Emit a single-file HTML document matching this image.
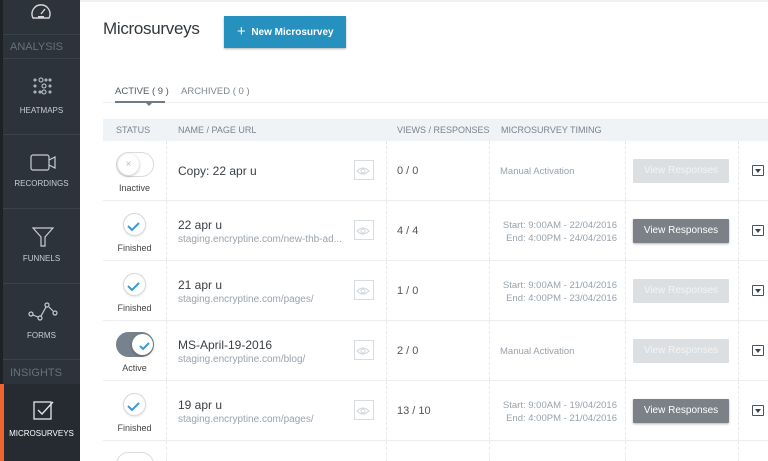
<!DOCTYPE html>
<html style="overflow:hidden;height:461px"><head><style>
*{margin:0;padding:0;box-sizing:border-box}
body{width:768px;height:461px;overflow:hidden;background:#fff;font-family:"Liberation Sans",sans-serif;position:relative}
.sb{position:absolute;left:0;top:0;width:80px;height:461px;background:#2c333b;border-left:3px solid #1d2227}
.sb .lab{position:absolute;left:0;width:77px;text-align:center;color:#c8ced4;font-size:8px}
.sb .sec{position:absolute;left:0;width:77px;color:#68717a;font-size:11px;padding-left:7px}
.sb .ln{position:absolute;left:0;width:77px;height:1px;background:#3a424a}
.abs{position:absolute}
.row{position:absolute;left:103px;width:665px;height:60px;border-bottom:1px solid #eceef0;overflow:hidden}
.vd{position:absolute;top:0;width:0;height:100%;border-left:1px dashed #e6e8ea}
.nm{position:absolute;left:75px;font-size:12px;color:#3b4046}
.url{position:absolute;left:75px;font-size:10px;color:#9aa3ab}
.eye{position:absolute;left:251px;top:19px;width:20px;height:20px;border:1px solid #d8dde2}
.vr{position:absolute;left:294px;font-size:11px;color:#555;top:24px}
.tm{position:absolute;left:397px;font-size:9.5px;color:#98a2ac;text-align:right;width:117px}
.btn{position:absolute;left:530px;top:18px;width:96px;height:24px;background:#dcdfe1;color:#f2f3f4;font-size:10px;text-align:center;line-height:24px;border-radius:1px}
.btn.on{background:#7b8187;color:#fff;box-shadow:0 1px 2px rgba(0,0,0,.3)}
.dd{position:absolute;left:649px;top:24px;width:12px;height:11px;border:1px solid #4b535b;border-radius:1px}
.dd:after{content:"";position:absolute;left:2px;top:3px;border:3px solid transparent;border-top:4px solid #3b434b}
.st{position:absolute;width:63px;text-align:center;font-size:9px;color:#444;top:42px;left:0}
.chk{position:absolute;left:20px;top:12px;width:23px;height:23px;border-radius:50%;border:1px solid #d5d9dd;background:#fff;box-shadow:0 1px 2px rgba(0,0,0,.1)}
.tg{position:absolute;left:13px;top:11px;width:38px;height:25px;border-radius:13px;border:1px solid #d8dcdf;background:#fff}
.tg.on{background:#76828d;border-color:#76828d}
.knob{position:absolute;top:1px;width:21px;height:21px;border-radius:50%;background:#fff;box-shadow:0 1px 3px rgba(0,0,0,.25)}
</style></head><body>
<div class="sb">
<svg class="abs" style="left:27px;top:3px" width="22" height="17" viewBox="0 0 22 17"><path d="M3 15 A9 9 0 1 1 19 15 Z" fill="none" stroke="#d4d8dc" stroke-width="1.4"/><path d="M11 11 L15 6" stroke="#d4d8dc" stroke-width="1.4"/><rect x="8" y="13" width="6" height="2" fill="#d4d8dc"/></svg>
<div class="ln" style="top:34px"></div>
<div class="sec" style="top:41px">ANALYSIS</div>
<div class="ln" style="top:58px"></div>
<svg class="abs" style="left:30px;top:77px" width="20" height="20" viewBox="0 0 20 20" fill="none" stroke="#c8ced4" stroke-width="1"><circle cx="2" cy="3" r="1"/><circle cx="8" cy="3" r="2"/><circle cx="13" cy="3" r="1"/><circle cx="17" cy="3" r="1"/><circle cx="2" cy="9" r="1"/><circle cx="11" cy="9" r="2"/><circle cx="17" cy="9" r="1"/><circle cx="2" cy="15" r="1"/><circle cx="7" cy="15" r="1"/><circle cx="11" cy="15" r="2"/><circle cx="17" cy="15" r="1"/></svg>
<div class="lab" style="top:106px">HEATMAPS</div>
<div class="ln" style="top:134px"></div>
<svg class="abs" style="left:27px;top:154px" width="27" height="17" viewBox="0 0 27 17" fill="none" stroke="#c8ced4" stroke-width="1.2"><rect x="1" y="1" width="18" height="15" rx="2"/><path d="M19 6 L25 3 V14 L19 11"/></svg>
<div class="lab" style="top:179px">RECORDINGS</div>
<div class="ln" style="top:208px"></div>
<svg class="abs" style="left:29px;top:227px" width="22" height="20" viewBox="0 0 22 20" fill="none" stroke="#c8ced4" stroke-width="1.2"><path d="M1 1 H21 L13 10 V19 H9 V10 Z"/></svg>
<div class="lab" style="top:254px">FUNNELS</div>
<div class="ln" style="top:283px"></div>
<svg class="abs" style="left:25px;top:302px" width="30" height="20" viewBox="0 0 30 20" fill="none" stroke="#c8ced4" stroke-width="1.2"><circle cx="3" cy="12" r="2"/><circle cx="12" cy="16" r="2"/><circle cx="19" cy="3" r="2"/><circle cx="27" cy="11" r="2"/><path d="M5 13 L10 15 M13 14 L18 5 M21 5 L25 9"/></svg>
<div class="lab" style="top:331px">FORMS</div>
<div class="ln" style="top:359px"></div>
<div class="sec" style="top:367px">INSIGHTS</div>
<div class="abs" style="left:-3px;top:384px;width:4px;height:77px;background:#f0652f"></div>
<div class="abs" style="left:1px;top:384px;width:76px;height:77px;background:#252b31"></div>
<svg class="abs" style="left:30px;top:400px" width="22" height="20" viewBox="0 0 22 20" fill="none" stroke="#e4e7ea" stroke-width="1.3"><rect x="1" y="2" width="17" height="17"/><path d="M5 10 L9 14 L20 2"/></svg>
<div class="lab" style="top:429px;color:#fff">MICROSURVEYS</div>
</div>
<div class="abs" style="left:80px;top:0;width:688px;height:2px;background:#eef0f2"></div>
<div class="abs" style="left:103px;top:19px;font-size:17px;color:#33383d;font-weight:bold;letter-spacing:-0.3px;font-weight:normal">Microsurveys</div>
<div class="abs" style="left:224px;top:16px;width:122px;height:32px;background:#2690be;color:#fff;font-size:10px;font-weight:bold;line-height:32px;padding-left:13px;box-shadow:0 1px 2px rgba(0,0,0,.3)"><span style="font-size:15px;font-weight:normal;vertical-align:-1px">+</span>&nbsp; New Microsurvey</div>
<div class="abs" style="left:115px;top:86px;font-size:9.5px;color:#4f5a64">ACTIVE ( 9 )</div>
<div class="abs" style="left:181px;top:86px;font-size:9.5px;color:#7d868e">ARCHIVED ( 0 )</div>
<div class="abs" style="left:103px;top:102px;width:665px;height:1px;background:#eceef0"></div>
<div class="abs" style="left:115px;top:101px;width:50px;height:2px;background:#6f7b86"></div>
<div class="abs" style="left:146px;top:103px;border:3px solid transparent;border-top:3px solid #6f7b86"></div>
<div class="abs" style="left:103px;top:119px;width:665px;height:22px;background:#f0f3f6;font-size:9px;color:#7a838b;line-height:22px">
<span class="abs" style="left:13px">STATUS</span><span class="abs" style="left:75px">NAME / PAGE URL</span><span class="abs" style="left:294px">VIEWS / RESPONSES</span><span class="abs" style="left:398px">MICROSURVEY TIMING</span></div>

<div class="row" style="top:141px"><div class="vd" style="left:63px"></div><div class="vd" style="left:283px"></div><div class="vd" style="left:386px"></div><div class="vd" style="left:522px"></div><div class="vd" style="left:635px"></div>
<div class="tg"><div class="knob" style="left:1px;color:#bbb;font-size:10px;text-align:center;line-height:21px">×</div></div><div class="st">Inactive</div>
<div class="nm" style="top:23px">Copy: 22 apr u</div><div class="eye"></div><div class="vr">0 / 0</div>
<div class="tm" style="top:25px;text-align:left;left:397px">Manual Activation</div><div class="btn">View Responses</div><div class="dd"></div></div>

<div class="row" style="top:201px"><div class="vd" style="left:63px"></div><div class="vd" style="left:283px"></div><div class="vd" style="left:386px"></div><div class="vd" style="left:522px"></div><div class="vd" style="left:635px"></div>
<div class="chk"></div><div class="st">Finished</div>
<div class="nm" style="top:17px">22 apr u</div><div class="url" style="top:33px">staging.encryptine.com/new-thb-ad...</div><div class="eye"></div><div class="vr">4 / 4</div>
<div class="tm" style="top:18px;line-height:13px">Start: 9:00AM - 22/04/2016<br>End: 4:00PM - 24/04/2016</div><div class="btn on">View Responses</div><div class="dd"></div></div>

<div class="row" style="top:261px"><div class="vd" style="left:63px"></div><div class="vd" style="left:283px"></div><div class="vd" style="left:386px"></div><div class="vd" style="left:522px"></div><div class="vd" style="left:635px"></div>
<div class="chk"></div><div class="st">Finished</div>
<div class="nm" style="top:17px">21 apr u</div><div class="url" style="top:33px">staging.encryptine.com/pages/</div><div class="eye"></div><div class="vr">1 / 0</div>
<div class="tm" style="top:18px;line-height:13px">Start: 9:00AM - 21/04/2016<br>End: 4:00PM - 23/04/2016</div><div class="btn">View Responses</div><div class="dd"></div></div>

<div class="row" style="top:321px"><div class="vd" style="left:63px"></div><div class="vd" style="left:283px"></div><div class="vd" style="left:386px"></div><div class="vd" style="left:522px"></div><div class="vd" style="left:635px"></div>
<div class="tg on"><div class="knob" style="left:15px"></div></div><div class="st">Active</div>
<div class="nm" style="top:17px">MS-April-19-2016</div><div class="url" style="top:33px">staging.encryptine.com/blog/</div><div class="eye"></div><div class="vr">2 / 0</div>
<div class="tm" style="top:25px;text-align:left">Manual Activation</div><div class="btn">View Responses</div><div class="dd"></div></div>

<div class="row" style="top:381px"><div class="vd" style="left:63px"></div><div class="vd" style="left:283px"></div><div class="vd" style="left:386px"></div><div class="vd" style="left:522px"></div><div class="vd" style="left:635px"></div>
<div class="chk"></div><div class="st">Finished</div>
<div class="nm" style="top:17px">19 apr u</div><div class="url" style="top:33px">staging.encryptine.com/pages/</div><div class="eye"></div><div class="vr">13 / 10</div>
<div class="tm" style="top:18px;line-height:13px">Start: 9:00AM - 19/04/2016<br>End: 4:00PM - 21/04/2016</div><div class="btn on">View Responses</div><div class="dd"></div></div>

<div class="row" style="top:441px;height:20px;border-bottom:none"><div class="vd" style="left:63px"></div><div class="vd" style="left:283px"></div><div class="vd" style="left:386px"></div><div class="vd" style="left:522px"></div><div class="vd" style="left:635px"></div>
<div class="tg"></div></div>

<svg class="abs" style="left:0;top:0;pointer-events:none" width="768" height="461">
<g fill="none" stroke="#3a9ad9" stroke-width="2"><path d="M128 226 l4 4 l7 -7"/><path d="M128 286 l4 4 l7 -7"/><path d="M128 406 l4 4 l7 -7"/><path d="M140 346 l3 3 l6 -6"/></g>
<g fill="none" stroke="#cfd5da" stroke-width="1"><path d="M357 171 q6 -6 12 0 q-6 6 -12 0z"/><circle cx="363" cy="171" r="2"/><path d="M357 231 q6 -6 12 0 q-6 6 -12 0z"/><circle cx="363" cy="231" r="2"/><path d="M357 291 q6 -6 12 0 q-6 6 -12 0z"/><circle cx="363" cy="291" r="2"/><path d="M357 351 q6 -6 12 0 q-6 6 -12 0z"/><circle cx="363" cy="351" r="2"/><path d="M357 411 q6 -6 12 0 q-6 6 -12 0z"/><circle cx="363" cy="411" r="2"/></g>
</svg>
</body></html>
